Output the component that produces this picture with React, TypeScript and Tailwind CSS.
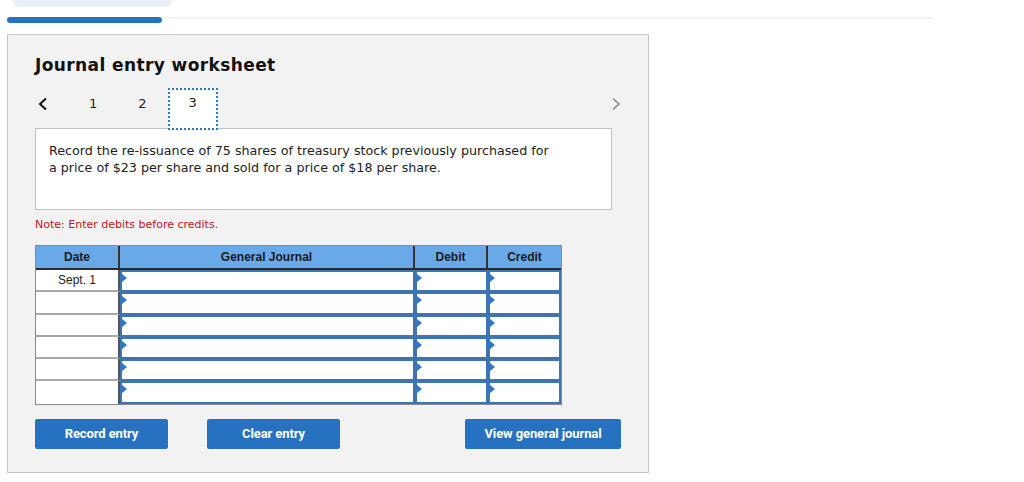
import React from 'react';

const rows = ['Sept. 1', '', '', '', '', ''];

const Marker = () => (
  <span className="absolute left-0 top-[2px] w-0 h-0 border-y-[4px] border-y-transparent border-l-[5px] border-l-[#2a78d4]" />
);

const InputCell = ({ width }: { width: string }) => (
  <div className={`relative ${width} h-full border-2 border-[#3f74b3] bg-white`}>
    <Marker />
  </div>
);

const App = () => {
  return (
    <div className="relative w-[1024px] h-[482px] bg-white overflow-hidden font-['DejaVu_Sans',sans-serif]">
      {/* top strip */}
      <div className="absolute left-[13px] top-[-10px] w-[159px] h-[17px] rounded-b-[6px] bg-[#e9eff7]" />
      <div className="absolute left-[162px] top-[17px] w-[771px] h-[2px] bg-[#f2f2f2]" />
      <div className="absolute left-[7px] top-[17px] w-[155px] h-[6px] rounded-[3px] bg-[#2672c0]" />

      <div className="pt-[34px] pl-[7px]">
        <div className="w-[642px] h-[439px] border border-[#c9c9c9] bg-[#f2f2f2] pl-[27px] pt-[20px]">
          <h1 className="text-[17px] leading-[20px] font-bold text-[#111] tracking-[0.4px]">Journal entry worksheet</h1>

          {/* step nav */}
          <div className="relative flex items-center h-[30px] mt-[14px] w-[576px]">
            <svg width="12" height="14" viewBox="0 0 12 14" className="ml-[2px]">
              <path d="M9 1.5 L3 7 L9 12.5" fill="none" stroke="#111" strokeWidth="2" />
            </svg>
            <span className="ml-[40px] text-[13px] text-[#222]">1</span>
            <span className="ml-[41px] text-[13px] text-[#222]">2</span>
            <div className="ml-[21px] -mt-[1px] self-start relative z-10 w-[50px] h-[42px] bg-white border-2 border-dotted border-[#2f78cf] flex justify-center pt-[5px] text-[13px] leading-[16px] text-[#222]">
              3
            </div>
            <svg width="12" height="14" viewBox="0 0 12 14" className="ml-auto mr-[-11px]">
              <path d="M3 1.5 L9 7 L3 12.5" fill="none" stroke="#888" strokeWidth="1.6" />
            </svg>
          </div>

          {/* instructions */}
          <div className="mt-[9px] w-[577px] h-[82px] border border-[#c3c3c3] bg-white pl-[13px] pt-[13px] text-[12.7px] leading-[17px] text-[#222]">
            <p>Record the re-issuance of 75 shares of treasury stock previously purchased for</p>
            <p>a price of $23 per share and sold for a price of $18 per share.</p>
          </div>

          <p className="mt-[8px] text-[11px] leading-[14px] text-[#c4161c]">Note: Enter debits before credits.</p>

          {/* journal table */}
          <div className="mt-[13px] w-[527px] border border-[#8a8a8a] font-['Liberation_Sans',Arial,sans-serif]">
            <div className="flex h-[24px] bg-[#6aa9e8] border-b-2 border-b-[#2b2b2b] text-[12px] font-bold text-[#1a1a1a]">
              <div className="w-[84px] flex items-center justify-center border-r-2 border-r-[#333]">Date</div>
              <div className="w-[295px] flex items-center justify-center border-r-2 border-r-[#333]">General Journal</div>
              <div className="w-[73px] flex items-center justify-center border-r-2 border-r-[#333]">Debit</div>
              <div className="flex-1 flex items-center justify-center">Credit</div>
            </div>
            {rows.map((d, i) => (
              <div key={i} className="flex h-[22.3px]">
                <div
                  className={`w-[84px] bg-white flex items-center justify-center text-[12px] text-[#222] border-r-2 border-r-[#555] ${
                    i < rows.length - 1 ? 'border-b-2 border-b-[#a9a9a9]' : ''
                  }`}
                >
                  {d}
                </div>
                <InputCell width="w-[295px]" />
                <InputCell width="w-[73px]" />
                <div className="flex-1 h-full">
                  <InputCell width="w-full" />
                </div>
              </div>
            ))}
          </div>

          {/* actions */}
          <div className="flex mt-[14px] w-[586px] font-['Roboto',sans-serif] text-[13px] font-bold text-white tracking-[-0.1px]">
            <button className="w-[133px] h-[30px] rounded-[2px] bg-[#2672c0]">Record entry</button>
            <button className="ml-[39px] w-[133px] h-[30px] rounded-[2px] bg-[#2672c0]">Clear entry</button>
            <button className="ml-auto w-[156px] h-[30px] rounded-[2px] bg-[#2672c0]">View general journal</button>
          </div>
        </div>
      </div>
    </div>
  );
};

export default App;
